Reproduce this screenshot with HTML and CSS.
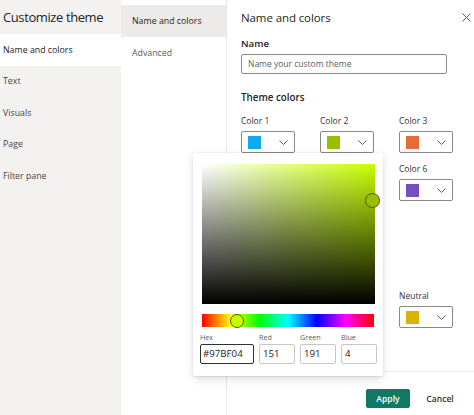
FILE: index.html
```html
<!DOCTYPE html>
<html lang="en">
<head>
<meta charset="utf-8">
<title>Customize theme</title>
<link rel="stylesheet" href="styles.css">
</head>
<body>
<div class="app">
  <nav class="nav">
    <div class="nav-title">Customize theme</div>
    <div class="nav-item selected">Name and colors</div>
    <div class="nav-item">Text</div>
    <div class="nav-item">Visuals</div>
    <div class="nav-item">Page</div>
    <div class="nav-item">Filter pane</div>
  </nav>
  <div class="sub">
    <div class="sub-item selected">Name and colors</div>
    <div class="sub-item">Advanced</div>
  </div>
  <main class="main">
    <header class="main-head">
      <h1 class="main-title">Name and colors</h1>
      <button class="close" aria-label="Close">
        <svg width="9" height="9" viewBox="0 0 9 9"><path d="M0.5 0.5 L8.5 8.5 M8.5 0.5 L0.5 8.5" stroke="#605e5c" stroke-width="1" fill="none"/></svg>
      </button>
    </header>
    <div class="main-body">
      <div class="field-label">Name</div>
      <div class="text-input">Name your custom theme</div>
      <h2 class="section">Theme colors</h2>
      <div class="color-grid">
        <div class="cell"><div class="c-label">Color 1</div><div class="dd"><span class="sw sw-1"></span><svg class="chev" width="9" height="5" viewBox="0 0 9 5"><path d="M0.5 0.5 L4.5 4.5 L8.5 0.5" stroke="#605e5c" fill="none"/></svg></div></div>
        <div class="cell"><div class="c-label">Color 2</div><div class="dd"><span class="sw sw-2"></span><svg class="chev" width="9" height="5" viewBox="0 0 9 5"><path d="M0.5 0.5 L4.5 4.5 L8.5 0.5" stroke="#605e5c" fill="none"/></svg></div></div>
        <div class="cell"><div class="c-label">Color 3</div><div class="dd"><span class="sw sw-3"></span><svg class="chev" width="9" height="5" viewBox="0 0 9 5"><path d="M0.5 0.5 L4.5 4.5 L8.5 0.5" stroke="#605e5c" fill="none"/></svg></div></div>
        <div class="cell"><div class="c-label">Color 4</div><div class="dd"><span class="sw sw-4"></span><svg class="chev" width="9" height="5" viewBox="0 0 9 5"><path d="M0.5 0.5 L4.5 4.5 L8.5 0.5" stroke="#605e5c" fill="none"/></svg></div></div>
        <div class="cell"><div class="c-label">Color 5</div><div class="dd"><span class="sw sw-5"></span><svg class="chev" width="9" height="5" viewBox="0 0 9 5"><path d="M0.5 0.5 L4.5 4.5 L8.5 0.5" stroke="#605e5c" fill="none"/></svg></div></div>
        <div class="cell"><div class="c-label">Color 6</div><div class="dd"><span class="sw sw-6"></span><svg class="chev" width="9" height="5" viewBox="0 0 9 5"><path d="M0.5 0.5 L4.5 4.5 L8.5 0.5" stroke="#605e5c" fill="none"/></svg></div></div>
        <div class="cell"><div class="c-label">Color 7</div><div class="dd"><span class="sw sw-7"></span><svg class="chev" width="9" height="5" viewBox="0 0 9 5"><path d="M0.5 0.5 L4.5 4.5 L8.5 0.5" stroke="#605e5c" fill="none"/></svg></div></div>
        <div class="cell"><div class="c-label">Color 8</div><div class="dd"><span class="sw sw-8"></span><svg class="chev" width="9" height="5" viewBox="0 0 9 5"><path d="M0.5 0.5 L4.5 4.5 L8.5 0.5" stroke="#605e5c" fill="none"/></svg></div></div>
      </div>
      <h2 class="section">Sentiment colors</h2>
      <div class="color-grid">
        <div class="cell"><div class="c-label">Positive</div><div class="dd"><span class="sw sw-pos"></span><svg class="chev" width="9" height="5" viewBox="0 0 9 5"><path d="M0.5 0.5 L4.5 4.5 L8.5 0.5" stroke="#605e5c" fill="none"/></svg></div></div>
        <div class="cell"><div class="c-label">Negative</div><div class="dd"><span class="sw sw-neg"></span><svg class="chev" width="9" height="5" viewBox="0 0 9 5"><path d="M0.5 0.5 L4.5 4.5 L8.5 0.5" stroke="#605e5c" fill="none"/></svg></div></div>
        <div class="cell"><div class="c-label">Neutral</div><div class="dd"><span class="sw sw-neu"></span><svg class="chev" width="9" height="5" viewBox="0 0 9 5"><path d="M0.5 0.5 L4.5 4.5 L8.5 0.5" stroke="#605e5c" fill="none"/></svg></div></div>
      </div>
      <h2 class="section section-last">Divergent colors</h2>
      <div class="color-grid">
        <div class="cell"><div class="c-label">Maximum</div></div>
        <div class="cell"><div class="c-label">Center</div></div>
        <div class="cell"><div class="c-label">Minimum</div></div>
      </div>
    </div>
    <footer class="footer">
      <button class="btn btn-primary">Apply</button>
      <button class="btn btn-default">Cancel</button>
    </footer>
  </main>

  <div class="picker">
    <div class="sv">
      <span class="sv-thumb"></span>
    </div>
    <div class="hue">
      <span class="hue-thumb"></span>
    </div>
    <div class="fields">
      <div class="fld fld-hex"><div class="f-label">Hex</div><div class="f-input f-focus">#97BF04</div></div>
      <div class="fld"><div class="f-label">Red</div><div class="f-input">151</div></div>
      <div class="fld"><div class="f-label">Green</div><div class="f-input">191</div></div>
      <div class="fld"><div class="f-label">Blue</div><div class="f-input">4</div></div>
    </div>
  </div>
</div>
</body>
</html>
```

FILE: styles.css
```css
* { box-sizing: border-box; }
html, body {
  margin: 0;
  padding: 0;
  background: #fff;
}
body {
  width: 474px;
  height: 415px;
  overflow: hidden;
  font-family: "Open Sans", "Noto Sans", "DejaVu Sans", sans-serif;
  color: #252423;
}
.app {
  position: relative;
  display: flex;
  width: 474px;
  height: 415px;
}

/* left nav */
.nav {
  width: 121px;
  flex: none;
  background: #f3f2f1;
}
.nav-title {
  height: 34px;
  display: flex;
  align-items: center;
  padding-left: 3px;
  font-size: 13px;
  font-weight: 500;
  letter-spacing: -0.4px;
  color: #252423;
}
.nav-item {
  height: 31.5px;
  display: flex;
  align-items: center;
  padding-left: 3px;
  font-size: 8.8px;
  color: #484644;
}
.nav-item.selected {
  background: #fff;
  color: #252423;
}

/* sub nav */
.sub {
  width: 106px;
  flex: none;
  padding-top: 5px;
  border-right: 1px solid #e8e6e4;
}
.sub-item {
  height: 32px;
  display: flex;
  align-items: center;
  padding-left: 11px;
  font-size: 8.8px;
  color: #605e5c;
}
.sub-item.selected {
  background: #edebe9;
  color: #252423;
}

/* main */
.main {
  flex: 1;
  display: flex;
  flex-direction: column;
  min-width: 0;
}
.main-head {
  height: 34px;
  flex: none;
  display: flex;
  align-items: center;
  justify-content: space-between;
  padding-left: 14px;
  padding-right: 3px;
}
.main-title {
  margin: 0;
  font-size: 11.5px;
  font-weight: 400;
  letter-spacing: -0.1px;
  color: #252423;
}
.close {
  width: 10px;
  height: 10px;
  padding: 0;
  border: 0;
  background: none;
  display: flex;
  align-items: center;
  justify-content: center;
}
.main-body {
  flex: 1;
  overflow: hidden;
  padding-left: 14px;
  padding-top: 2px;
}
.field-label {
  font-size: 9.7px;
  font-weight: 600;
  line-height: 16px;
  color: #252423;
}
.text-input {
  margin-top: 2px;
  width: 206px;
  height: 20px;
  border: 1px solid #8a8886;
  border-radius: 2px;
  padding-left: 6px;
  font-size: 8.5px;
  line-height: 18px;
  color: #605e5c;
}
.section {
  margin: 15px 0 7px;
  font-size: 9.8px;
  font-weight: 600;
  line-height: 18px;
  color: #252423;
}
.section-last { margin-bottom: 8px; }
.color-grid {
  display: grid;
  grid-template-columns: repeat(3, 79px);
  row-gap: 9px;
}
.c-label {
  font-size: 8.5px;
  line-height: 14px;
  color: #323130;
}
.dd {
  position: relative;
  margin-top: 3px;
  width: 54px;
  height: 22px;
  border: 1px solid #8a8886;
  border-radius: 2px;
  display: flex;
  align-items: center;
  justify-content: space-between;
  padding: 0 6px 0 6px;
}
.sw {
  width: 13px;
  height: 13px;
  display: block;
}
.chev { display: block; margin-top: 1px; }
.sw-1 { background: #14a9ee; }
.sw-2 { background: #97bf04; }
.sw-3 { background: #e66c37; }
.sw-4 { background: #6b007b; }
.sw-5 { background: #e044a7; }
.sw-6 { background: #744ec2; }
.sw-7 { background: #d9b300; }
.sw-8 { background: #d64550; }
.sw-pos { background: #1aab40; }
.sw-neg { background: #d64554; }
.sw-neu { background: #d9b300; }

/* footer */
.footer {
  height: 44px;
  flex: none;
  border-top: 1px solid #edebe9;
  display: flex;
  justify-content: flex-end;
  align-items: flex-start;
  gap: 8px;
  padding-top: 17px;
  padding-right: 12px;
}
.btn {
  height: 19px;
  width: 44px;
  border-radius: 2px;
  font-family: inherit;
  font-size: 8.6px;
  font-weight: 600;
  padding: 0;
  display: flex;
  align-items: center;
  justify-content: center;
}
.btn-primary {
  background: #117865;
  border: 1px solid #117865;
  color: #fff;
}
.btn-default {
  background: transparent;
  border: 1px solid transparent;
  color: #323130;
}

/* color picker popup */
.picker {
  position: absolute;
  left: 193px;
  top: 153px;
  width: 190px;
  height: 223px;
  background: #fff;
  border-radius: 2px;
  box-shadow: 0 3px 10px rgba(0, 0, 0, 0.13), 0 0.6px 2px rgba(0, 0, 0, 0.1);
  padding: 11px 8px 0 9px;
}
.sv {
  position: relative;
  width: 173px;
  height: 140px;
  background:
    linear-gradient(to top, #000, rgba(0, 0, 0, 0)),
    linear-gradient(to right, #fff, #c8ff00);
}
.sv-thumb {
  position: absolute;
  left: 162.5px;
  top: 28.5px;
  width: 15px;
  height: 15px;
  border-radius: 50%;
  background: #97bf04;
  border: 1px solid #4a5a0a;
}
.hue {
  position: relative;
  margin-top: 10px;
  width: 172px;
  height: 13px;
  background: linear-gradient(to right, #f00, #ff0 16.67%, #0f0 33.33%, #0ff 50%, #00f 66.67%, #f0f 83.33%, #f00);
}
.hue-thumb {
  position: absolute;
  left: 28px;
  top: -0.5px;
  width: 14px;
  height: 14px;
  border-radius: 50%;
  background: #c8ff00;
  border: 1px solid #4a5a0a;
}
.fields {
  display: flex;
  gap: 5px;
  margin-top: 4px;
  margin-left: -2px;
}
.fld { width: 36px; flex: none; }
.fld-hex { width: 54px; }
.f-label {
  font-size: 7.2px;
  line-height: 12px;
  color: #605e5c;
}
.f-input {
  margin-top: 1px;
  height: 20px;
  border: 1px solid #c8c6c4;
  border-radius: 2px;
  padding-left: 3px;
  font-size: 9.7px;
  line-height: 18px;
  color: #252423;
}
.f-focus {
  border: 1px solid #323130;
  padding-left: 2px;
}
```
